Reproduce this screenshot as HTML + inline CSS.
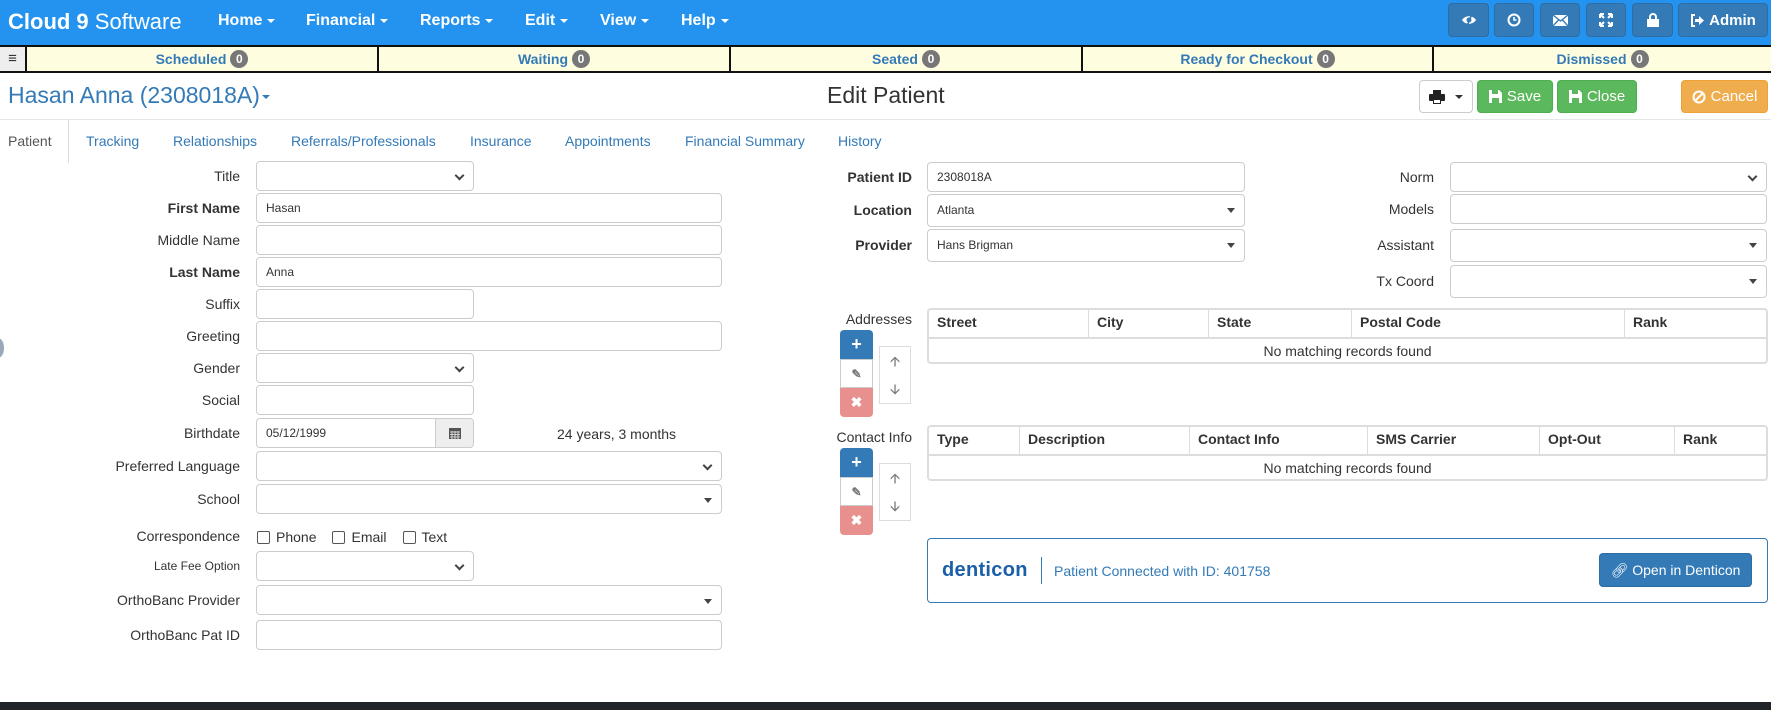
<!DOCTYPE html>
<html><head><meta charset="utf-8"><style>
*{box-sizing:border-box;margin:0;padding:0}
body{width:1771px;height:710px;overflow:hidden;position:relative;background:#fff;font-family:"Liberation Sans",Arial,sans-serif;color:#333}
.a{position:absolute}
.nav{left:0;top:0;width:1771px;height:45px;background:#2393ef}
.nav .m{color:#fff;font-weight:bold;font-size:16px;top:12px}
.car{display:inline-block;width:0;height:0;border-left:4px solid transparent;border-right:4px solid transparent;border-top:4px solid currentColor;vertical-align:middle;margin-left:5px}
.tb{top:3px;height:34px;background:#337ab7;border:1px solid #2e6da4;border-radius:4px;color:#fff;display:flex;align-items:center;justify-content:center;font-weight:bold;font-size:15px}
.sb{top:45px;height:28px;border-top:2px solid #111;border-bottom:2px solid #111;background:#fffde0;color:#337ab7;font-weight:bold;font-size:14px;display:flex;align-items:center;justify-content:center;border-left:2px solid #111}
.bd{display:inline-block;background:#777;color:#fff;border-radius:9px;font-size:12px;min-width:18px;height:18px;line-height:18px;text-align:center;margin-left:4px}
.btn{top:80px;height:33px;border-radius:4px;display:flex;align-items:center;justify-content:center;font-size:15px;color:#fff;gap:5px}
.tab{top:133px;font-size:14px;color:#337ab7}
.lb{font-size:14px;text-align:right;width:230px;left:10px;line-height:30px}
.lb2{font-size:14px;text-align:right;width:200px;line-height:30px}
.in{height:30px;border:1px solid #ccc;border-radius:4px;background:#fff;font-size:12px;line-height:28px;padding-left:9px;color:#333}
.chev::after{content:"";position:absolute;right:10px;top:10px;width:5px;height:5px;border-right:2px solid #444;border-bottom:2px solid #444;transform:rotate(45deg)}
.dd::after{content:"";position:absolute;right:9px;top:13px;border-left:4px solid transparent;border-right:4px solid transparent;border-top:5px solid #444}
.tbl{border:2px solid #ddd;border-radius:4px;background:#fff}
.th{position:absolute;top:0;height:27px;line-height:25px;font-weight:bold;font-size:14px;padding-left:8px;border-right:1px solid #ddd}
.sq{width:33px;height:29px;display:flex;align-items:center;justify-content:center;color:#fff;font-weight:bold;font-size:18px}
</style></head><body>
<div class="a nav">
 <div class="a" style="left:8px;top:9px;color:#fff;font-size:22px"><b>Cloud 9</b> Software</div>
 <div class="a m" style="left:218px">Home<span class="car"></span></div>
 <div class="a m" style="left:306px">Financial<span class="car"></span></div>
 <div class="a m" style="left:420px">Reports<span class="car"></span></div>
 <div class="a m" style="left:525px">Edit<span class="car"></span></div>
 <div class="a m" style="left:600px">View<span class="car"></span></div>
 <div class="a m" style="left:681px">Help<span class="car"></span></div>
 <div class="a tb" style="left:1448px;width:41px"><svg width="16" height="14" viewBox="0 0 16 14"><path d="M1 7C4 2 12 2 15 7C12 12 4 12 1 7Z" fill="#fff"/><circle cx="8" cy="7" r="2.5" fill="#337ab7"/><path d="M11 1L6 13" stroke="#337ab7" stroke-width="1.6"/></svg></div>
 <div class="a tb" style="left:1494px;width:40px"><svg width="14" height="14"><circle cx="7" cy="7" r="5.5" fill="none" stroke="#fff" stroke-width="2"/><path d="M7 4V7H9.5" stroke="#fff" stroke-width="1.6" fill="none"/></svg></div>
 <div class="a tb" style="left:1540px;width:40px"><svg width="15" height="11"><rect x="0" y="0" width="15" height="11" fill="#fff"/><path d="M0 0L7.5 6L15 0M0 11L5.5 5M15 11L9.5 5" stroke="#337ab7" stroke-width="1.3" fill="none"/></svg></div>
 <div class="a tb" style="left:1586px;width:40px"><svg width="14" height="14"><path d="M1 1L5 5M13 1L9 5M1 13L5 9M13 13L9 9M1 1h4M1 1v4M13 1h-4M13 1v4M1 13h4M1 13v-4M13 13h-4M13 13v-4" stroke="#fff" stroke-width="2" fill="none"/></svg></div>
 <div class="a tb" style="left:1632px;width:41px"><svg width="12" height="14"><rect x="0" y="6" width="12" height="8" fill="#fff"/><path d="M3 7V4a3 3 0 0 1 6 0v3" stroke="#fff" stroke-width="2" fill="none"/></svg></div>
 <div class="a tb" style="left:1678px;width:90px"><svg width="14" height="13" style="margin-right:5px"><path d="M5 1H2V12H5" stroke="#fff" stroke-width="2" fill="none"/><path d="M5 5H9V2L14 6.5L9 11V8H5Z" fill="#fff"/></svg>Admin</div>
</div>
<div class="a" style="left:0;top:45px;width:25px;height:28px;background:#eee;border-top:2px solid #111;border-bottom:2px solid #111;font-size:15px;font-weight:bold;text-align:center;line-height:23px">&#8801;</div>
<div class="a sb" style="left:25px;width:352px">Scheduled<span class="bd">0</span></div>
<div class="a sb" style="left:377px;width:352px">Waiting<span class="bd">0</span></div>
<div class="a sb" style="left:729px;width:352px">Seated<span class="bd">0</span></div>
<div class="a sb" style="left:1081px;width:351px">Ready for Checkout<span class="bd">0</span></div>
<div class="a sb" style="left:1432px;width:339px">Dismissed<span class="bd">0</span></div>

<div class="a" style="left:8px;top:82px;font-size:23px;color:#337ab7">Hasan Anna (2308018A)<span class="car" style="margin-left:2px"></span></div>
<div class="a" style="left:827px;top:82px;font-size:23px;color:#333">Edit Patient</div>
<div class="a btn" style="left:1419px;width:54px;background:#fff;border:1px solid #ccc;color:#333"><svg width="16" height="14"><rect x="4" y="0" width="8" height="4" fill="#222"/><rect x="0" y="4" width="16" height="7" rx="1" fill="#222"/><rect x="4" y="9" width="8" height="5" fill="#222"/><rect x="5" y="10" width="6" height="3" fill="#fff"/></svg><span class="car" style="color:#333"></span></div>
<div class="a btn" style="left:1477px;width:76px;background:#5cb85c;border:1px solid #4cae4c"><svg width="13" height="13"><path d="M0 0H10L13 3V13H0Z" fill="#fff"/><rect x="3" y="0" width="6" height="4" fill="#5cb85c"/><rect x="3" y="8" width="7" height="5" fill="#5cb85c"/></svg>Save</div>
<div class="a btn" style="left:1557px;width:80px;background:#5cb85c;border:1px solid #4cae4c"><svg width="13" height="13"><path d="M0 0H10L13 3V13H0Z" fill="#fff"/><rect x="3" y="0" width="6" height="4" fill="#5cb85c"/><rect x="3" y="8" width="7" height="5" fill="#5cb85c"/></svg>Close</div>
<div class="a btn" style="left:1681px;width:87px;background:#f0ad4e;border:1px solid #eea236"><svg width="14" height="14"><circle cx="7" cy="7" r="5.5" stroke="#fff" stroke-width="2" fill="none"/><path d="M3 11L11 3" stroke="#fff" stroke-width="2"/></svg>Cancel</div>
<div class="a" style="left:0;top:119px;width:1771px;height:1px;background:#e5e5e5"></div>
<div class="a" style="left:0;top:120px;width:69px;height:43px;border-right:1px solid #ddd;background:#fff"></div>
<div class="a tab" style="left:8px;color:#555">Patient</div>
<div class="a tab" style="left:86px">Tracking</div>
<div class="a tab" style="left:173px">Relationships</div>
<div class="a tab" style="left:291px">Referrals/Professionals</div>
<div class="a tab" style="left:470px">Insurance</div>
<div class="a tab" style="left:565px">Appointments</div>
<div class="a tab" style="left:685px">Financial Summary</div>
<div class="a tab" style="left:838px">History</div>

<div class="a lb" style="top:161px">Title</div><div class="a in chev" style="left:256px;top:161px;width:218px"></div>
<div class="a lb" style="top:193px;font-weight:bold">First Name</div><div class="a in" style="left:256px;top:193px;width:466px">Hasan</div>
<div class="a lb" style="top:225px">Middle Name</div><div class="a in" style="left:256px;top:225px;width:466px"></div>
<div class="a lb" style="top:257px;font-weight:bold">Last Name</div><div class="a in" style="left:256px;top:257px;width:466px">Anna</div>
<div class="a lb" style="top:289px">Suffix</div><div class="a in" style="left:256px;top:289px;width:218px"></div>
<div class="a lb" style="top:321px">Greeting</div><div class="a in" style="left:256px;top:321px;width:466px"></div>
<div class="a lb" style="top:353px">Gender</div><div class="a in chev" style="left:256px;top:353px;width:218px"></div>
<div class="a lb" style="top:385px">Social</div><div class="a in" style="left:256px;top:385px;width:218px"></div>
<div class="a lb" style="top:418px">Birthdate</div><div class="a in" style="left:256px;top:418px;width:218px">05/12/1999</div>
<div class="a" style="left:435px;top:419px;width:38px;height:28px;background:#eee;border-left:1px solid #ccc;border-radius:0 4px 4px 0;display:flex;align-items:center;justify-content:center"><svg width="12" height="12"><rect x="0" y="1" width="12" height="11" fill="#555"/><path d="M1 5H11M1 7.5H11M1 10H11M3 4V12M6 4V12M9 4V12" stroke="#eee" stroke-width="0.8"/></svg></div>
<div class="a" style="left:557px;top:426px;font-size:14px">24 years, 3 months</div>
<div class="a lb" style="top:451px">Preferred Language</div><div class="a in chev" style="left:256px;top:451px;width:466px"></div>
<div class="a lb" style="top:484px">School</div><div class="a in dd" style="left:256px;top:484px;width:466px"></div>
<div class="a lb" style="top:521px">Correspondence</div>
<div class="a" style="left:257px;top:529px;font-size:14px;display:flex;align-items:center;gap:6px"><span style="width:13px;height:13px;border:1px solid #555;border-radius:2px"></span>Phone<span style="width:13px;height:13px;border:1px solid #555;border-radius:2px;margin-left:10px"></span>Email<span style="width:13px;height:13px;border:1px solid #555;border-radius:2px;margin-left:10px"></span>Text</div>
<div class="a lb" style="top:551px;font-size:12px">Late Fee Option</div><div class="a in chev" style="left:256px;top:551px;width:218px"></div>
<div class="a lb" style="top:585px">OrthoBanc Provider</div><div class="a in dd" style="left:256px;top:585px;width:466px"></div>
<div class="a lb" style="top:620px">OrthoBanc Pat ID</div><div class="a in" style="left:256px;top:620px;width:466px"></div>

<div class="a lb2" style="left:712px;top:162px;font-weight:bold">Patient ID</div><div class="a in" style="left:927px;top:162px;width:318px">2308018A</div>
<div class="a lb2" style="left:712px;top:195px;font-weight:bold">Location</div><div class="a in dd" style="left:927px;top:194px;width:318px;height:33px;line-height:31px">Atlanta</div>
<div class="a lb2" style="left:712px;top:230px;font-weight:bold">Provider</div><div class="a in dd" style="left:927px;top:229px;width:318px;height:33px;line-height:31px">Hans Brigman</div>

<div class="a lb2" style="left:1234px;top:162px">Norm</div><div class="a in chev" style="left:1450px;top:162px;width:317px"></div>
<div class="a lb2" style="left:1234px;top:194px">Models</div><div class="a in" style="left:1450px;top:194px;width:317px"></div>
<div class="a lb2" style="left:1234px;top:230px">Assistant</div><div class="a in dd" style="left:1450px;top:229px;width:317px;height:33px"></div>
<div class="a lb2" style="left:1234px;top:266px">Tx Coord</div><div class="a in dd" style="left:1450px;top:265px;width:317px;height:33px"></div>

<div class="a" style="left:812px;top:311px;font-size:14px;width:100px;text-align:right">Addresses</div>
<div class="a" style="left:840px;top:330px;border-radius:4px;overflow:hidden">
 <div class="sq" style="background:#337ab7">+</div><div class="sq" style="background:#fff;border:1px solid #ccc;color:#777;font-size:12px">&#9998;</div><div class="sq" style="background:#e8908d;font-size:14px">&#10006;</div></div>
<div class="a" style="left:879px;top:346px;width:32px;height:58px;border:1px solid #ddd;color:#777;font-size:14px;text-align:center;line-height:28px">&#129129;<br>&#129131;</div>
<div class="a tbl" style="left:927px;top:308px;width:841px;height:56px">
 <div class="th" style="left:0;width:160px">Street</div><div class="th" style="left:160px;width:120px">City</div><div class="th" style="left:280px;width:143px">State</div><div class="th" style="left:423px;width:273px">Postal Code</div><div class="th" style="left:696px;width:141px;border-right:none">Rank</div>
 <div class="a" style="left:0;top:27px;width:837px;border-top:2px solid #ddd;text-align:center;font-size:14px;line-height:24px">No matching records found</div>
</div>

<div class="a" style="left:812px;top:429px;font-size:14px;width:100px;text-align:right">Contact Info</div>
<div class="a" style="left:840px;top:448px;border-radius:4px;overflow:hidden">
 <div class="sq" style="background:#337ab7">+</div><div class="sq" style="background:#fff;border:1px solid #ccc;color:#777;font-size:12px">&#9998;</div><div class="sq" style="background:#e8908d;font-size:14px">&#10006;</div></div>
<div class="a" style="left:879px;top:463px;width:32px;height:58px;border:1px solid #ddd;color:#777;font-size:14px;text-align:center;line-height:28px">&#129129;<br>&#129131;</div>
<div class="a tbl" style="left:927px;top:425px;width:841px;height:56px">
 <div class="th" style="left:0;width:91px">Type</div><div class="th" style="left:91px;width:170px">Description</div><div class="th" style="left:261px;width:178px">Contact Info</div><div class="th" style="left:439px;width:172px">SMS Carrier</div><div class="th" style="left:611px;width:135px">Opt-Out</div><div class="th" style="left:746px;width:91px;border-right:none">Rank</div>
 <div class="a" style="left:0;top:27px;width:837px;border-top:2px solid #ddd;text-align:center;font-size:14px;line-height:24px">No matching records found</div>
</div>

<div class="a" style="left:927px;top:538px;width:841px;height:65px;border:1px solid #337ab7;border-radius:4px">
 <div class="a" style="left:14px;top:20px;font-size:20px;color:#1b5fa8;font-weight:bold;letter-spacing:0.3px">denticon</div>
 <div class="a" style="left:113px;top:18px;width:1px;height:27px;background:#337ab7"></div>
 <div class="a" style="left:126px;top:24px;font-size:14px;color:#337ab7">Patient Connected with ID: 401758</div>
 <div class="a" style="left:671px;top:14px;width:153px;height:34px;background:#337ab7;border:1px solid #2e6da4;border-radius:4px;color:#fff;font-size:14px;text-align:center;line-height:32px">&#128279;&#xFE0E; Open in Denticon</div>
</div>
<div class="a" style="left:-8px;top:338px;width:12px;height:20px;border-radius:50%;background:#9aa8b8"></div>
<div class="a" style="left:0;top:702px;width:1771px;height:8px;background:#212529"></div>
</body></html>
